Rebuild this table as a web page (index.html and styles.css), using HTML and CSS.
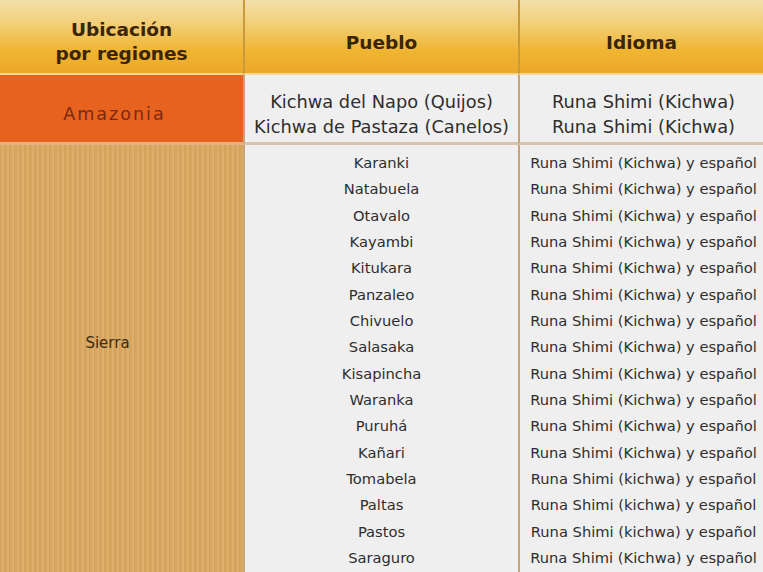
FILE: index.html
```html
<!DOCTYPE html>
<html lang="es">
<head>
<meta charset="utf-8">
<link rel="stylesheet" href="styles.css">
</head>
<body>
<div class="table">
  <div class="head h1">Ubicación<br>por regiones</div>
  <div class="head h2">Pueblo</div>
  <div class="head h3">Idioma</div>

  <div class="region amazonia">Amazonia</div>
  <div class="cell amz">
    <div class="line">Kichwa del Napo (Quijos)</div>
    <div class="line">Kichwa de Pastaza (Canelos)</div>
  </div>
  <div class="cell amz lang">
    <div class="line">Runa Shimi (Kichwa)</div>
    <div class="line">Runa Shimi (Kichwa)</div>
  </div>

  <div class="region sierra"><span>Sierra</span></div>
  <div class="cell list">
    <div class="row">Karanki</div>
    <div class="row">Natabuela</div>
    <div class="row">Otavalo</div>
    <div class="row">Kayambi</div>
    <div class="row">Kitukara</div>
    <div class="row">Panzaleo</div>
    <div class="row">Chivuelo</div>
    <div class="row">Salasaka</div>
    <div class="row">Kisapincha</div>
    <div class="row">Waranka</div>
    <div class="row">Puruhá</div>
    <div class="row">Kañari</div>
    <div class="row">Tomabela</div>
    <div class="row">Paltas</div>
    <div class="row">Pastos</div>
    <div class="row">Saraguro</div>
  </div>
  <div class="cell list lang">
    <div class="row">Runa Shimi (Kichwa) y español</div>
    <div class="row">Runa Shimi (Kichwa) y español</div>
    <div class="row">Runa Shimi (Kichwa) y español</div>
    <div class="row">Runa Shimi (Kichwa) y español</div>
    <div class="row">Runa Shimi (Kichwa) y español</div>
    <div class="row">Runa Shimi (Kichwa) y español</div>
    <div class="row">Runa Shimi (Kichwa) y español</div>
    <div class="row">Runa Shimi (Kichwa) y español</div>
    <div class="row">Runa Shimi (Kichwa) y español</div>
    <div class="row">Runa Shimi (Kichwa) y español</div>
    <div class="row">Runa Shimi (Kichwa) y español</div>
    <div class="row">Runa Shimi (Kichwa) y español</div>
    <div class="row">Runa Shimi (kichwa) y español</div>
    <div class="row">Runa Shimi (kichwa) y español</div>
    <div class="row">Runa Shimi (kichwa) y español</div>
    <div class="row">Runa Shimi (Kichwa) y español</div>
  </div>
</div>
</body>
</html>
```

FILE: styles.css
```css
html, body {
  margin: 0;
  padding: 0;
  background: #d8aa66;
}
body {
  width: 763px;
  height: 572px;
  overflow: hidden;
  font-family: "DejaVu Sans", "Lato", sans-serif;
}
.table {
  display: grid;
  grid-template-columns: 243px 275px 245px;
  grid-template-rows: 75px 70px 427px;
  background: #c9a474;
}
.head {
  display: flex;
  align-items: center;
  justify-content: center;
  text-align: center;
  font-weight: 700;
  font-size: 18.5px;
  line-height: 24px;
  color: #3a2508;
  background: linear-gradient(180deg, #f4e0ac 0%, #f2cd74 35%, #efb531 70%, #eca829 100%);
  border-bottom: 2px solid #f4d894;
  box-sizing: border-box;
}
.h1 { padding-top: 10px; }
.h2, .h3 { padding-top: 12px; }
.h2 { border-left: 2px solid #c99a3a; }
.h3 { border-left: 2px solid #c99a3a; }

.region {
  display: flex;
  align-items: center;
  justify-content: center;
}
.amazonia {
  background: #e8621f;
  color: #7a2a12;
  font-size: 17.5px;
  letter-spacing: 2px;
  padding-top: 11px;
  padding-right: 14px;
  border-bottom: 3px solid #e6b083;
  box-sizing: border-box;
}
.sierra {
  background:
    repeating-linear-gradient(90deg, #d6a55e 0px, #d6a55e 2px, #dcaf6c 2px, #dcaf6c 4px, #d3a15b 4px, #d3a15b 5px);
  color: #3d2a10;
  font-size: 15px;
  padding-right: 28px;
  padding-bottom: 32px;
}
.cell {
  background: #f0eff0;
  color: #2e2e2e;
  font-size: 14.7px;
  text-align: center;
  border-left: 2px solid #c8a37a;
  box-sizing: border-box;
}
.amz {
  display: flex;
  flex-direction: column;
  justify-content: center;
  font-size: 17.8px;
  line-height: 25px;
  padding-top: 11px;
  border-bottom: 3px solid #d8c4aa;
}
.list {
  padding-top: 5px;
}
.row {
  height: 26.33px;
  line-height: 26.33px;
  white-space: nowrap;
}
.lang {
  padding-left: 4px;
}
```
